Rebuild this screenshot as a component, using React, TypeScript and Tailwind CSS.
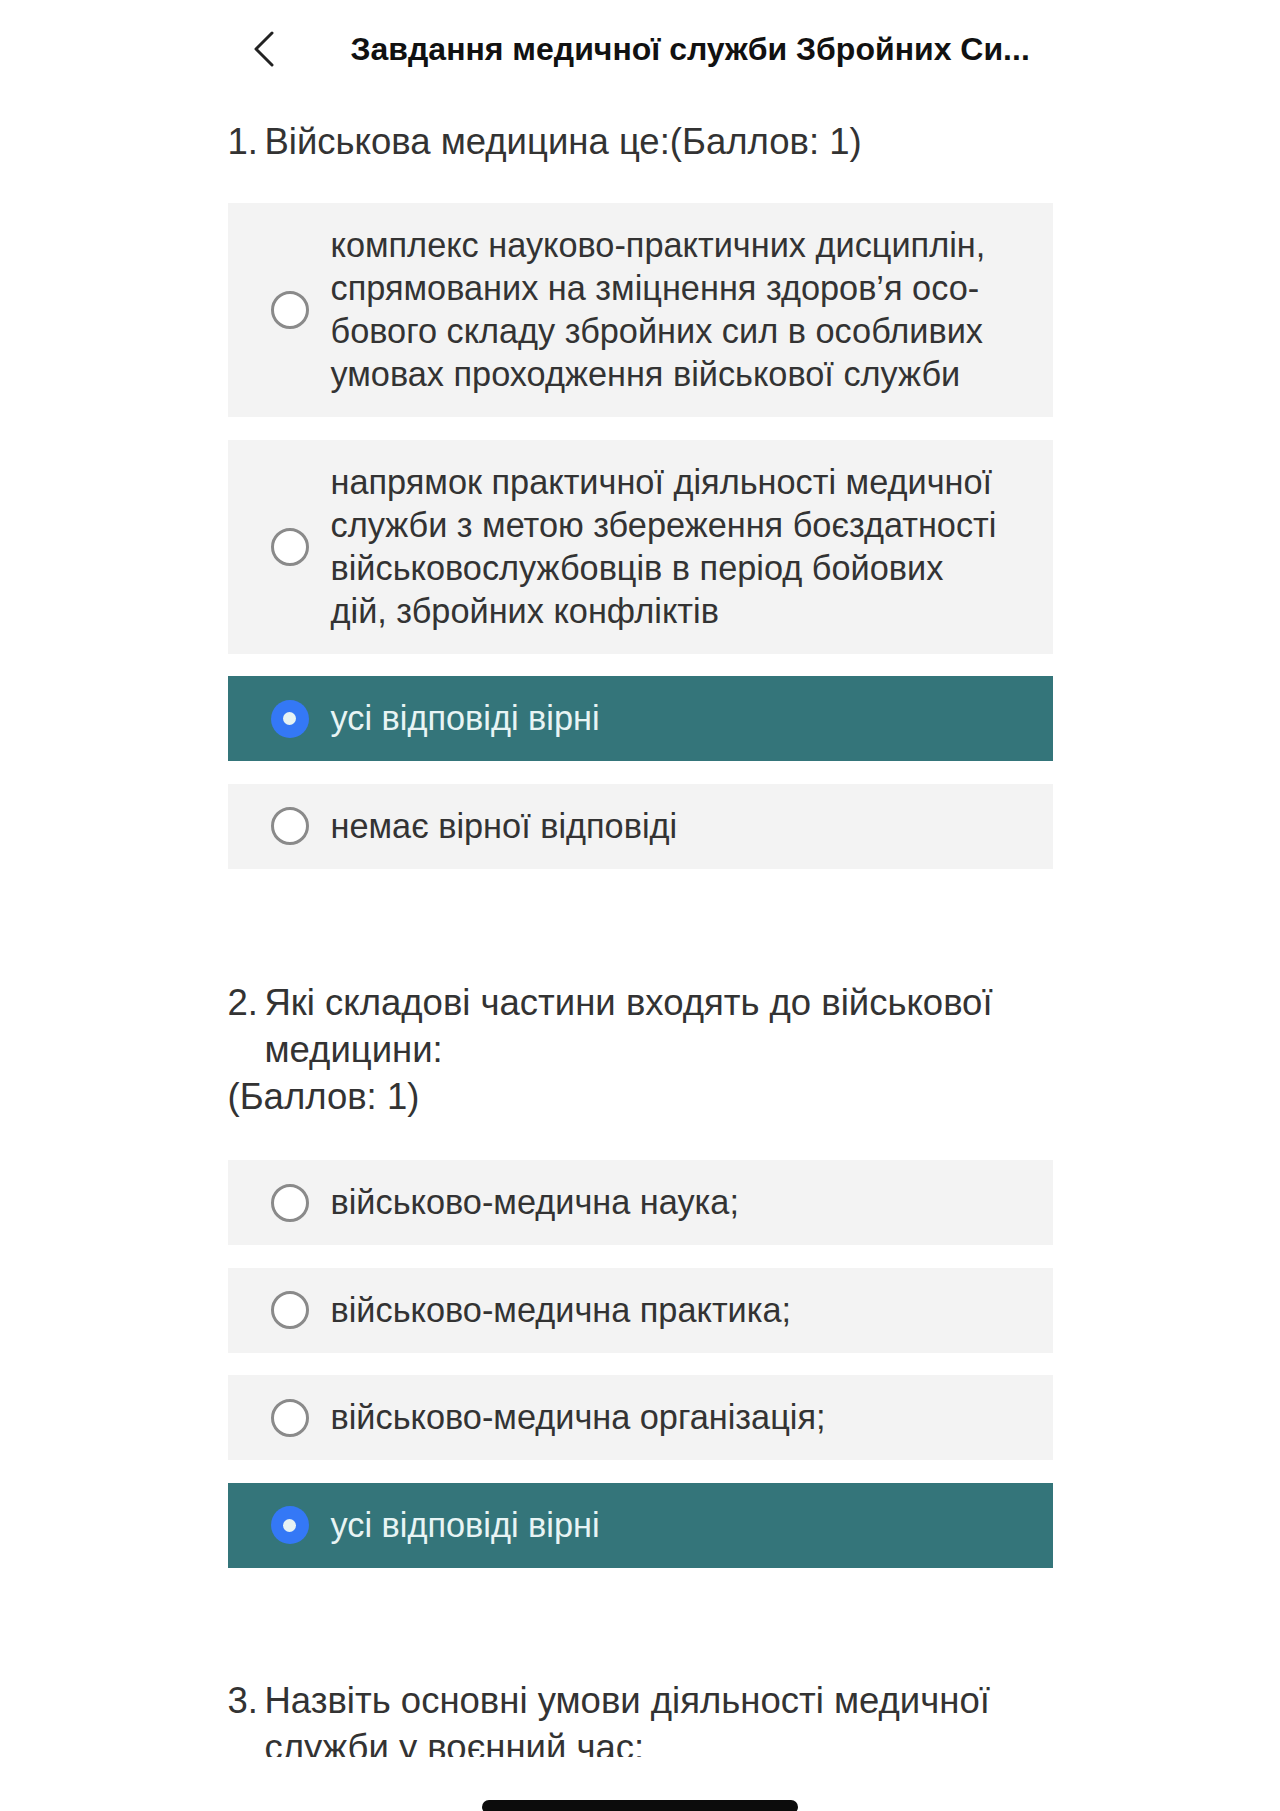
import React from "react";

type Opt = { lines: string[]; selected?: boolean };

function Radio({ selected }: { selected?: boolean }) {
  if (selected) {
    return (
      <div className="w-[38px] h-[38px] shrink-0 rounded-full bg-[#3478f6] flex items-center justify-center">
        <div className="w-[13px] h-[13px] rounded-full bg-[#e6f3f3]" />
      </div>
    );
  }
  return <div className="w-[38px] h-[38px] shrink-0 rounded-full border-[3px] border-[#8a8a8a] bg-white" />;
}

function Option({ lines, selected }: Opt) {
  return (
    <div
      className={
        selected
          ? "flex items-center pl-[43px] py-[21px] bg-[#34757a]"
          : "flex items-center pl-[43px] py-[21px] bg-[#f3f3f3]"
      }
    >
      <Radio selected={selected} />
      <div
        className={
          selected
            ? "ml-[22px] text-[34.3px] leading-[43px] text-[#e8f4f4] whitespace-nowrap"
            : "ml-[22px] text-[34.3px] leading-[43px] text-[#333333] whitespace-nowrap"
        }
      >
        {lines.map((l, i) => (
          <div key={i}>{l}</div>
        ))}
      </div>
    </div>
  );
}

function Question({ num, lines, score, inlineScore }: { num: string; lines: string[]; score?: string; inlineScore?: boolean }) {
  return (
    <div className="text-[36.5px] leading-[47px] text-[#333333]">
      <div className="flex whitespace-nowrap">
        <span className="w-[37px] shrink-0">{num}</span>
        <div>
          {lines.map((l, i) => (
            <div key={i}>
              {l}
              {inlineScore && i === lines.length - 1 ? score : null}
            </div>
          ))}
        </div>
      </div>
      {!inlineScore && score ? <div>{score}</div> : null}
    </div>
  );
}

export default function App() {
  return (
    <div className="w-[1280px] h-[1811px] overflow-hidden bg-white flex flex-col items-center font-['Liberation_Sans',Arial,sans-serif]">
      <header className="w-[825px] h-[98px] shrink-0 flex items-center pl-[26px]">
        <svg width="20" height="36" viewBox="0 0 20 36" className="shrink-0">
          <polyline points="18,2 2,18 18,34" fill="none" stroke="#222222" strokeWidth="3" strokeLinecap="round" strokeLinejoin="round" />
        </svg>
        <div className="ml-[77px] text-[32px] font-bold text-[#111111] whitespace-nowrap">
          Завдання медичної служби Збройних Си...
        </div>
      </header>

      <main className="w-[825px] flex-1 overflow-hidden pt-[20px]">
        <Question num="1." lines={["Військова медицина це:"]} score="(Баллов: 1)" inlineScore />
        <div className="mt-[38px] flex flex-col gap-[22.5px]">
          <Option
            lines={[
              "комплекс науково-практичних дисциплін,",
              "спрямованих на зміцнення здоров’я осо-",
              "бового складу збройних сил в особливих",
              "умовах проходження військової служби",
            ]}
          />
          <Option
            lines={[
              "напрямок практичної діяльності медичної",
              "служби з метою збереження боєздатності",
              "військовослужбовців в період бойових",
              "дій, збройних конфліктів",
            ]}
          />
          <Option lines={["усі відповіді вірні"]} selected />
          <Option lines={["немає вірної відповіді"]} />
        </div>

        <div className="mt-[110px]">
          <Question num="2." lines={["Які складові частини входять до військової", "медицини:"]} score="(Баллов: 1)" />
        </div>
        <div className="mt-[40.5px] flex flex-col gap-[22.5px]">
          <Option lines={["військово-медична наука;"]} />
          <Option lines={["військово-медична практика;"]} />
          <Option lines={["військово-медична організація;"]} />
          <Option lines={["усі відповіді вірні"]} selected />
        </div>

        <div className="mt-[109px]">
          <Question num="3." lines={["Назвіть основні умови діяльності медичної", "служби у воєнний час:"]} />
        </div>
      </main>

      <footer className="w-full h-[54px] shrink-0 flex justify-center pt-[43px] bg-white">
        <div className="w-[316px] h-[14px] rounded-full bg-[#0c0c0c]" />
      </footer>
    </div>
  );
}
